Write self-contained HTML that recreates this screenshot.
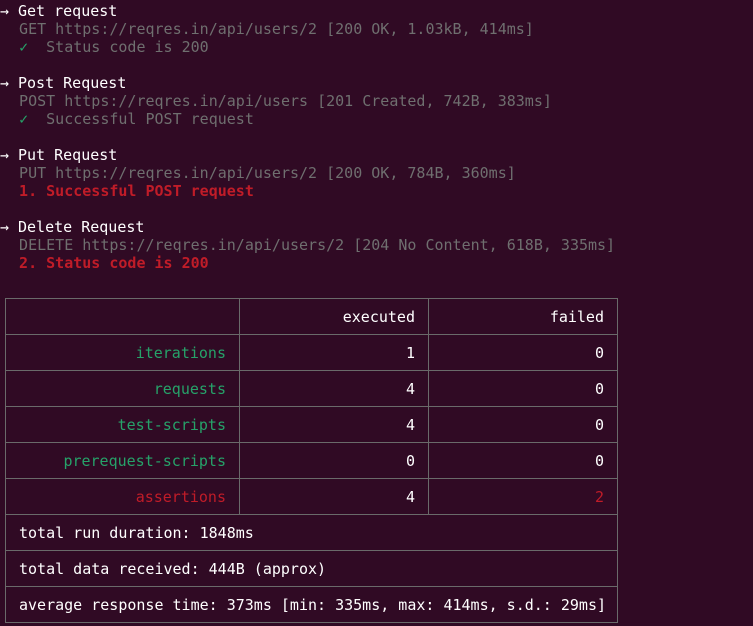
<!DOCTYPE html>
<html><head><style>
html,body{margin:0;padding:0;background:#300a24;width:753px;height:626px;overflow:hidden}
body{font-family:"DejaVu Sans Mono","Liberation Mono",monospace;font-size:15px;color:#fff;position:relative}
.l{position:absolute;left:1px;height:18px;line-height:18px;white-space:pre}
.d{color:#6f6f6f}.g{color:#26a269}.r{color:#c01c28;font-weight:bold}
.hl{position:absolute;background:#6a6a6a;height:1px}
.vl{position:absolute;background:#6a6a6a;width:1px}
.c{position:absolute;height:36px;line-height:36px;text-align:right;white-space:pre}
.gr{color:#26a269}.rd{color:#c01c28}
.f{position:absolute;left:19px;height:36px;line-height:36px;white-space:pre}
.a{display:inline-block;width:18px;margin-left:-1px}
</style></head><body>
<div class="l" style="top:2px"><span class="a">→</span>Get request</div>
<div class="l d" style="top:20px">  GET https://reqres.in/api/users/2 [200 OK, 1.03kB, 414ms]</div>
<div class="l" style="top:38px">  <span class="g">✓</span>  <span class="d">Status code is 200</span></div>
<div class="l" style="top:74px"><span class="a">→</span>Post Request</div>
<div class="l d" style="top:92px">  POST https://reqres.in/api/users [201 Created, 742B, 383ms]</div>
<div class="l" style="top:110px">  <span class="g">✓</span>  <span class="d">Successful POST request</span></div>
<div class="l" style="top:146px"><span class="a">→</span>Put Request</div>
<div class="l d" style="top:164px">  PUT https://reqres.in/api/users/2 [200 OK, 784B, 360ms]</div>
<div class="l r" style="top:182px">  1. Successful POST request</div>
<div class="l" style="top:218px"><span class="a">→</span>Delete Request</div>
<div class="l d" style="top:236px">  DELETE https://reqres.in/api/users/2 [204 No Content, 618B, 335ms]</div>
<div class="l r" style="top:254px">  2. Status code is 200</div>

<div class="hl" style="left:5px;width:613px;top:298px"></div>
<div class="hl" style="left:5px;width:613px;top:334px"></div>
<div class="hl" style="left:5px;width:613px;top:370px"></div>
<div class="hl" style="left:5px;width:613px;top:406px"></div>
<div class="hl" style="left:5px;width:613px;top:442px"></div>
<div class="hl" style="left:5px;width:613px;top:478px"></div>
<div class="hl" style="left:5px;width:613px;top:514px"></div>
<div class="hl" style="left:5px;width:613px;top:550px"></div>
<div class="hl" style="left:5px;width:613px;top:586px"></div>
<div class="hl" style="left:5px;width:613px;top:622px"></div>
<div class="vl" style="left:5px;top:298px;height:325px"></div>
<div class="vl" style="left:617px;top:298px;height:325px"></div>
<div class="vl" style="left:239px;top:298px;height:216px"></div>
<div class="vl" style="left:428px;top:298px;height:216px"></div>

<div class="c" style="top:299px;left:240px;width:175px">executed</div>
<div class="c" style="top:299px;left:429px;width:175px">failed</div>
<div class="c gr" style="top:335px;left:6px;width:220px">iterations</div>
<div class="c" style="top:335px;left:240px;width:175px">1</div>
<div class="c" style="top:335px;left:429px;width:175px">0</div>
<div class="c gr" style="top:371px;left:6px;width:220px">requests</div>
<div class="c" style="top:371px;left:240px;width:175px">4</div>
<div class="c" style="top:371px;left:429px;width:175px">0</div>
<div class="c gr" style="top:407px;left:6px;width:220px">test-scripts</div>
<div class="c" style="top:407px;left:240px;width:175px">4</div>
<div class="c" style="top:407px;left:429px;width:175px">0</div>
<div class="c gr" style="top:443px;left:6px;width:220px">prerequest-scripts</div>
<div class="c" style="top:443px;left:240px;width:175px">0</div>
<div class="c" style="top:443px;left:429px;width:175px">0</div>
<div class="c rd" style="top:479px;left:6px;width:220px">assertions</div>
<div class="c" style="top:479px;left:240px;width:175px">4</div>
<div class="c rd" style="top:479px;left:429px;width:175px">2</div>

<div class="f" style="top:515px">total run duration: 1848ms</div>
<div class="f" style="top:551px">total data received: 444B (approx)</div>
<div class="f" style="top:587px">average response time: 373ms [min: 335ms, max: 414ms, s.d.: 29ms]</div>
</body></html>
